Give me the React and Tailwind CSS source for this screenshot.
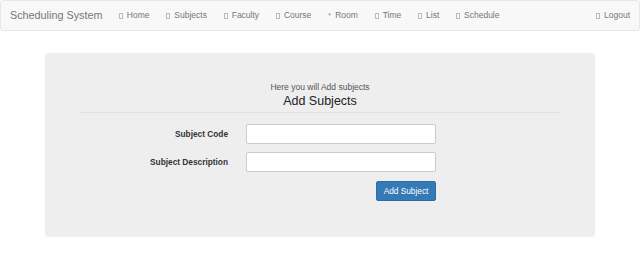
export default function App() {
  const items = [
    { icon: "box", label: "Home" },
    { icon: "box", label: "Subjects" },
    { icon: "box", label: "Faculty" },
    { icon: "box", label: "Course" },
    { icon: "star", label: "Room" },
    { icon: "box", label: "Time" },
    { icon: "box", label: "List" },
    { icon: "box", label: "Schedule" },
  ];

  const Icon = ({ type }) =>
    type === "star" ? (
      <span className="mr-[4px] text-[8px] leading-none text-[#999]">*</span>
    ) : (
      <span className="mr-[4px] inline-block h-[6px] w-[4px] border border-[#bbb]" />
    );

  return (
    <div className="min-h-[275px] bg-white font-['Liberation_Sans',Arial,sans-serif] text-[#333]">
      {/* Navbar */}
      <nav className="flex h-[31px] items-center rounded-[3px] border border-[#e7e7e7] bg-[#f8f8f8] pr-[9px]">
        <span className="pl-[9px] pr-[8px] text-[10.8px] text-[#777]">Scheduling System</span>
        <ul className="flex items-center">
          {items.map((item) => (
            <li key={item.label} className="flex items-center px-[8.4px] text-[8.5px] text-[#777]">
              <Icon type={item.icon} />
              <span>{item.label}</span>
            </li>
          ))}
        </ul>
        <div className="ml-auto flex items-center text-[8.5px] text-[#777]">
          <Icon type="box" />
          <span>Logout</span>
        </div>
      </nav>

      {/* Jumbotron */}
      <div className="mx-[45px] mt-[22px] h-[184px] rounded-[4px] bg-[#eeeeee] pt-[29px]">
        <p className="text-center text-[8.5px] leading-[11px] text-[#555]">Here you will Add subjects</p>
        <h3 className="text-center text-[12.5px] leading-[16px] text-[#222]">Add Subjects</h3>
        <hr className="mx-[35px] mt-[3px] border-t border-[#e2e2e2]" />

        <div className="mt-[11px] flex flex-col gap-[8px]">
          <div className="flex items-center">
            <label className="w-[183px] text-right text-[8.3px] font-bold text-[#333]">Subject Code</label>
            <input className="ml-[18px] h-[20px] w-[190px] rounded-[2px] border border-[#ccc] bg-white" />
          </div>
          <div className="flex items-center">
            <label className="w-[183px] text-right text-[8.3px] font-bold text-[#333]">Subject Description</label>
            <input className="ml-[18px] h-[20px] w-[190px] rounded-[2px] border border-[#ccc] bg-white" />
          </div>
          <div className="mt-[1px] flex">
            <button className="ml-[331px] h-[20px] w-[60px] rounded-[2px] border border-[#2e6da4] bg-[#337ab7] text-[8.3px] text-white">
              Add Subject
            </button>
          </div>
        </div>
      </div>
    </div>
  );
}
